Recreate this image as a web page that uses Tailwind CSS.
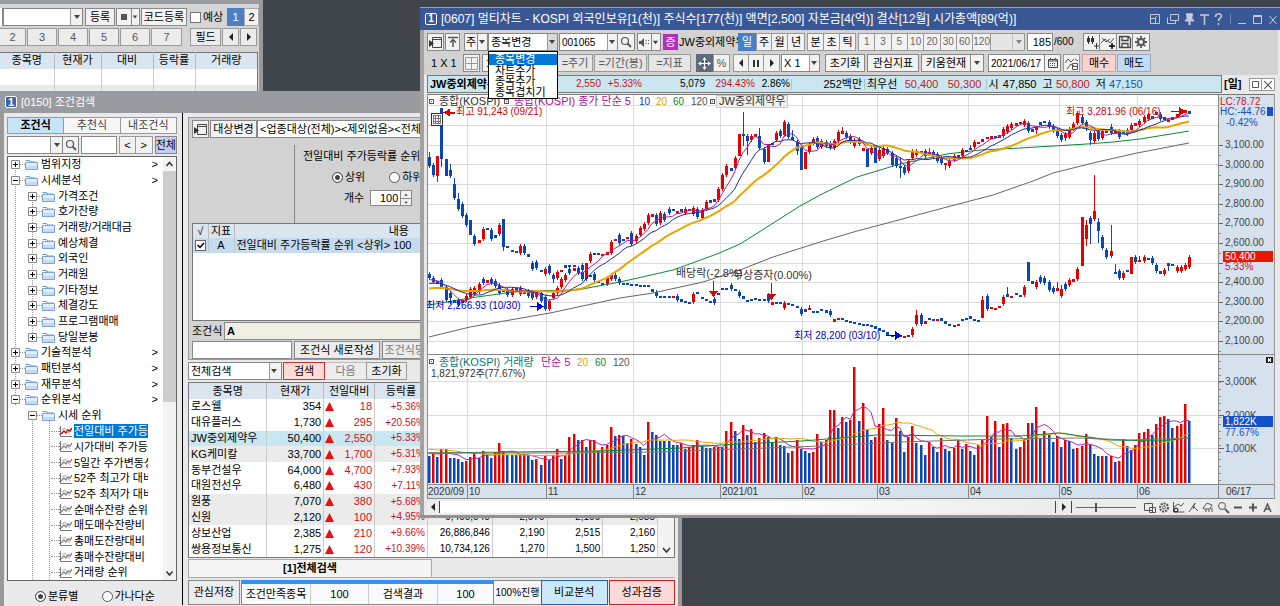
<!DOCTYPE html>
<html lang="ko">
<head>
  <meta charset="utf-8">
  <meta name="viewport" content="width=device-width, initial-scale=1">
  <title>멀티차트</title>
  <script src="https://cdn.jsdelivr.net/npm/@tailwindcss/browser@4"></script>
</head>
<body class="bg-[#40444b] text-black">

<!-- icons -->
<svg class="hidden">
  <symbol id="down" viewBox="0 0 8 8"><path d="M1 2h6L4 6z" fill="#444"/></symbol>
  <symbol id="left" viewBox="0 0 8 8"><path d="M6 0v8L2 4z" fill="#222"/></symbol>
  <symbol id="right" viewBox="0 0 8 8"><path d="M2 0v8l4-4z" fill="#222"/></symbol>
  <symbol id="search" viewBox="0 0 12 12"><circle cx="5" cy="5" r="3.5" fill="none" stroke="#555" stroke-width="1.2"/><path d="M7.500 7.500L11 11" stroke="#555" stroke-width="1.800"/></symbol>
  <symbol id="folder" viewBox="0 0 13 11"><path d="M.5 1.500h4l1.500 1.500h5.500v2" fill="#c3dafa" stroke="#6d97cf"/><path d="M.5 3.500h12v7H.5z" fill="#c3dafa" stroke="#7ba3d8"/><path d="M1 4h11v3H1z" fill="#e3eefc"/></symbol>
  <symbol id="graph" viewBox="0 0 13 11"><path d="M1.500 0v10.500H13M0 2.500h1.500M0 5.500h1.500M0 8.500h1.500M4.500 10v1M7.500 10v1M10.500 10v1" fill="none" stroke="#777"/><path d="M2 8l3-3 2 2 2-3 2 1 2-3" fill="none" stroke="currentColor" stroke-width="1.400"/><path d="M3 4l3-2 2 3 3 3" fill="none" stroke="#aaa"/></symbol>
  <symbol id="dock" viewBox="0 0 13 13"><path d="M3.500 1.500h9v10h-9zM3.500 3.500h9" fill="none" stroke="#444"/><path d="M0 4v7l5-3.500z" fill="#333"/></symbol>
  <symbol id="totop" viewBox="0 0 12 12"><path d="M1 1.500h10M6 11V4M3 6.500L6 3.500l3 3" fill="none" stroke="#555" stroke-width="1.500"/></symbol>
  <symbol id="minus" viewBox="0 0 9 9"><path d="M.5.5h8v8h-8z" fill="#fff" stroke="#888"/><path d="M2 4.500h5" stroke="#000"/></symbol>
  <symbol id="plus" viewBox="0 0 9 9"><path d="M.5.5h8v8h-8z" fill="#fff" stroke="#888"/><path d="M2 4.500h5M4.500 2v5" stroke="#000"/></symbol>
</svg>

<div class="relative h-screen overflow-hidden font-['Liberation_Sans','Noto_Sans_CJK_KR',sans-serif] text-[11px] leading-none whitespace-nowrap">

  <!-- watch list window -->
  <section class="absolute left-0 top-0 w-[263px] bg-[#d5d5d5] border-r-4 border-[#999]">
    <div class="h-1 bg-[#999da0]"></div>
    <div class="flex items-center h-[18px] mt-1">
      <span class="w-[3px] h-full bg-white border-r border-[#888]"></span>
      <div class="flex w-[80px] h-full border border-[#888] bg-white">
        <input type="text" aria-label="그룹" class="flex-1 w-0 outline-none">
        <button aria-label="그룹 열기" class="w-3 border-l border-[#999] bg-[#f2f2f2]"><svg class="size-2 m-auto"><use href="#down"/></svg></button>
      </div>
      <button class="w-[30px] h-full ml-[2px] border border-[#888] bg-[#f2f2f2]">등록</button>
      <button class="w-[16px] h-full ml-px border border-[#888] bg-[#f2f2f2] flex items-center justify-center" aria-label="색"><span class="size-[6px] bg-[#555]"></span></button>
      <button class="w-2 h-full border border-l-0 border-[#888] bg-[#f2f2f2]" aria-label="색 선택"><svg class="size-[6px]"><use href="#down"/></svg></button>
      <button class="w-[46px] h-full ml-px border border-[#888] bg-[#f2f2f2]">코드등록</button>
      <label class="flex items-center ml-[3px]"><input type="checkbox" class="appearance-none size-[11px] border border-[#777] bg-white mr-[2px]">예상</label>
      <button class="w-[17px] h-full ml-auto bg-[#4c80c4] text-white">1</button>
      <button class="w-[15px] h-full border border-[#aaa] bg-[#f2f2f2]">2</button>
    </div>
    <div class="flex h-[18px] mt-[2px] gap-px text-[#555]">
      <button class="w-[26px] border border-l-0 border-[#999] bg-[#ececec]">2</button>
      <button class="w-[30px] border border-[#999] bg-[#ececec]">3</button>
      <button class="w-[30px] border border-[#999] bg-[#ececec]">4</button>
      <button class="w-[30px] border border-[#999] bg-[#ececec]">5</button>
      <button class="w-[30px] border border-[#999] bg-[#ececec]">6</button>
      <button class="w-[31px] border border-[#999] bg-[#ececec]">7</button>
      <button class="w-[31px] ml-auto border border-[#999] bg-[#ececec] text-black">필드</button>
      <button class="w-[17px] border border-[#999] bg-[#ececec]" aria-label="이전"><svg class="size-2 m-auto"><use href="#left"/></svg></button>
      <button class="w-[17px] mr-[2px] border border-[#999] bg-[#ececec]" aria-label="다음"><svg class="size-2 m-auto"><use href="#right"/></svg></button>
    </div>
    <table class="w-[258px] mt-[6px] table-fixed border-t border-r border-[#777] bg-white">
      <thead><tr class="h-4 bg-[#dbe5f0]">
        <th class="w-[54px] font-normal border-r border-[#bbb]">종목명</th>
        <th class="w-[47px] font-normal border-r border-[#bbb]">현재가</th>
        <th class="w-[52px] font-normal border-r border-[#bbb]">대비</th>
        <th class="w-[42px] font-normal border-r border-[#bbb]">등락률</th>
        <th class="font-normal">거래량</th>
      </tr></thead>
      <tbody>
        <tr class="h-4"><td class="border-r border-[#ccc]"></td><td class="border-r border-[#ccc]"></td><td class="border-r border-[#ccc]"></td><td class="border-r border-[#ccc]"></td><td></td></tr>
        <tr class="h-4 bg-[#ebebeb]"><td class="border-r border-[#ccc]"></td><td class="border-r border-[#ccc]"></td><td class="border-r border-[#ccc]"></td><td class="border-r border-[#ccc]"></td><td></td></tr>
      </tbody>
    </table>
  </section>

  <!-- condition search window -->
  <section class="absolute left-0 top-[91px] bottom-0 w-[682px] bg-[#e9e9e9] border-x-4 border-[#999]">
    <header class="flex items-center h-[22px] -mx-1 pl-[5px] bg-[#989ca0] text-white">
      <span class="flex items-center justify-center size-3 rounded-xs border border-white bg-[#3e63a8] font-bold">1</span>
      <h2 class="ml-1">[0150] 조건검색</h2>
    </header>
    <div class="flex">
      <div class="w-[179px] pt-1 pl-[3px] pr-[5px] border-r border-black">
        <div class="flex h-[17px] border border-[#999] text-[#444]">
          <button class="flex-1 bg-[#c5e4fa] font-bold text-black">조건식</button>
          <button class="flex-1 border-l border-[#999] bg-[#f6f6f6]">추천식</button>
          <button class="flex-1 border-l border-[#999] bg-[#f6f6f6]">내조건식</button>
        </div>
        <div class="flex h-[18px] mt-[2px] mb-[2px]">
          <div class="flex w-[57px] border border-[#888] bg-white">
            <input type="text" aria-label="조건 찾기" class="flex-1 w-0 outline-none">
            <button class="w-3 border-l border-[#999] bg-[#f2f2f2]" aria-label="목록"><svg class="size-2 m-auto"><use href="#down"/></svg></button>
          </div>
          <button class="w-4 border border-l-0 border-[#888] bg-[#f2f2f2]" aria-label="찾기"><svg class="size-3 m-auto"><use href="#search"/></svg></button>
          <input type="text" aria-label="이름" class="w-9 ml-[2px] border border-[#888] bg-white outline-none">
          <button class="w-[17px] ml-[2px] border border-[#999] bg-[#f2f2f2]">&lt;</button>
          <button class="w-[17px] border border-l-0 border-[#999] bg-[#f2f2f2]">&gt;</button>
          <button class="flex-1 ml-[2px] border border-[#888] bg-[#c6ccf0]">전체</button>
        </div>
        <div class="relative flex h-[425px] border border-[#666] bg-white overflow-hidden">
          <span class="absolute left-[7px] top-1 h-[244px] border-l border-dotted border-[#999]"></span>
          <span class="absolute left-[24px] top-[36px] h-[148px] border-l border-dotted border-[#999]"></span>
          <span class="absolute left-[24px] top-[254px] bottom-0 border-l border-dotted border-[#999]"></span>
          <span class="absolute left-[41px] top-[264px] bottom-0 border-l border-dotted border-[#999]"></span>
          <ul id="tree" class="relative flex flex-col flex-1 min-w-0"></ul>
          <div class="flex flex-col w-[13px] bg-[#f3f3f3]">
            <svg class="w-[13px] h-[14px]" viewBox="0 0 13 14"><path d="M3.500 9L6.500 5.500 9.500 9" fill="none" stroke="#333" stroke-width="1.500"/></svg>
            <span class="h-[231px] bg-[#cdcdcd]"></span>
            <svg class="w-[13px] h-[14px] mt-auto" viewBox="0 0 13 14"><path d="M3.500 5.500L6.500 9 9.500 5.500" fill="none" stroke="#333" stroke-width="1.500"/></svg>
          </div>
        </div>
        <div class="flex mt-[10px] pl-7">
          <label class="flex items-center"><input type="radio" name="sort" checked class="appearance-none size-[11px] mr-[2px] rounded-full border border-[#555] bg-white checked:bg-[#444] checked:shadow-[inset_0_0_0_2px_white]">분류별</label>
          <label class="flex items-center ml-6"><input type="radio" name="sort" class="appearance-none size-[11px] mr-px rounded-full border border-[#555] bg-white">가나다순</label>
        </div>
      </div>

      <div class="flex-1 ml-[5px] pt-1 pr-[3px] min-w-0">
        <div class="border border-[#999] bg-[#d2d2d2] pl-[3px] pt-[2px]">
          <div class="flex h-[18px]">
            <button class="w-[17px] border border-[#888] bg-[#f2f2f2]" aria-label="고정"><svg class="size-[13px] m-auto"><use href="#dock"/></svg></button>
            <button class="w-[47px] ml-px border border-[#888] bg-[#f2f2f2]">대상변경</button>
            <div class="flex flex-1 items-center pl-[2px] border border-[#888] bg-white">&lt;업종대상(전체)&gt;&lt;제외없음&gt;&lt;전체기간&gt;</div>
          </div>
          <div class="flex pt-[7px]">
            <div class="w-[103px] border-r border-[#888]"></div>
            <div class="pt-[6px] pl-2 h-[78px]">
              <p class="h-[18px]">전일대비 주가등락률 순위</p>
              <div class="flex items-center h-4 pl-[29px]">
                <label class="flex items-center"><input type="radio" name="rank" checked class="appearance-none size-[11px] mr-[2px] rounded-full border border-[#555] bg-white checked:bg-[#444] checked:shadow-[inset_0_0_0_2px_white]">상위</label>
                <label class="flex items-center ml-6"><input type="radio" name="rank" class="appearance-none size-[11px] mr-[2px] rounded-full border border-[#555] bg-white">하위</label>
              </div>
              <div class="flex items-center mt-[5px] pl-[41px]">
                <label for="cnt">개수</label>
                <input id="cnt" type="text" value="100" class="w-[31px] h-4 ml-[6px] px-[2px] border border-[#888] bg-white text-right">
                <span class="flex flex-col w-[11px] h-4 border border-l-0 border-[#888] bg-[#f2f2f2]">
                  <svg class="flex-1" viewBox="0 0 10 7"><path d="M3 5l2-2 2 2z" fill="#444"/></svg>
                  <svg class="flex-1 border-t border-[#888]" viewBox="0 0 10 7"><path d="M3 3l2 2 2-2z" fill="#444"/></svg>
                </span>
              </div>
            </div>
          </div>
          <div class="h-[98px] border border-[#777] bg-white">
            <table class="w-full table-fixed">
              <thead><tr class="h-[14px] bg-[#dbe5f0]"><th class="w-[15px] font-normal border-r border-[#bbb]">√</th><th class="w-[26px] font-normal border-r border-[#bbb]">지표</th><th class="font-normal pr-[110px]">내용</th></tr></thead>
              <tbody><tr class="h-[15px] bg-[#c8dbec]">
                <td class="border-r border-[#b5c8d8]"><svg class="size-[11px] mx-auto bg-white border border-[#666]" viewBox="0 0 9 9"><path d="M1.500 4L4 6.500 8 2" fill="none" stroke="#000" stroke-width="1.500"/></svg></td>
                <td class="text-center border-r border-[#b5c8d8]">A</td>
                <td class="pl-[2px]">전일대비 주가등락률 순위 &lt;상위&gt; 100</td>
              </tr></tbody>
            </table>
          </div>
          <div class="flex items-center h-[18px] mt-px">
            <label for="expr" class="w-8">조건식</label>
            <input id="expr" type="text" value="A" class="flex-1 h-full px-[2px] border border-[#888] bg-[#efefe6] font-bold">
          </div>
          <div class="flex h-[18px] mt-px">
            <input type="text" aria-label="조건식 이름" class="w-[100px] border border-[#888] bg-white">
            <button class="w-[86px] ml-[2px] border border-[#888] bg-[#ececec]">조건식 새로작성</button>
            <button class="w-[76px] ml-[2px] border border-[#888] bg-[#ececec] text-[#777]">조건식당일저장</button>
          </div>
        </div>
        <div class="flex h-[18px] mt-[2px]">
          <div class="relative w-[94px] border border-[#888] bg-white">
            <select aria-label="검색 대상" class="appearance-none w-full h-4 pl-[2px] outline-none"><option>전체검색</option></select>
            <span class="absolute right-0 top-0 w-3 h-4 pt-1 border-l border-[#999] bg-[#f2f2f2] pointer-events-none"><svg class="size-2"><use href="#down"/></svg></span>
          </div>
          <button class="w-[42px] ml-px border border-[#c33] bg-[#fddcd8]">검색</button>
          <button class="w-[41px] border-y border-[#bbb] bg-[#ececec] text-[#777]">다음</button>
          <button class="w-[41px] border border-[#999] bg-[#ececec]">초기화</button>
        </div>
        <div class="flex mt-[2px] border border-[#777] bg-white">
          <table class="flex-1 h-[174px] table-fixed text-right">
            <thead><tr class="h-4 bg-[#dbe5f0] text-center">
              <th class="w-[78px] h-4 font-normal border-r border-[#bbb]">종목명</th>
              <th class="w-[57px] font-normal border-r border-[#bbb]">현재가</th>
              <th class="w-[51px] font-normal border-r border-[#bbb]">전일대비</th>
              <th class="w-[53px] font-normal border-r border-[#bbb]">등락률</th>
              <th class="w-[65px] font-normal border-r border-[#bbb]"></th>
              <th class="w-[55px] font-normal border-r border-[#bbb]"></th>
              <th class="w-[56px] font-normal border-r border-[#bbb]"></th>
              <th class="w-[55px] font-normal border-r border-[#bbb]"></th>
            </tr></thead>
            <tbody id="result"></tbody>
          </table>
          <div class="flex items-end justify-center w-4 bg-[#f3f3f3]"><svg class="w-[13px] h-[14px]" viewBox="0 0 13 14"><path d="M3 5l3.500 4L10 5" fill="none" stroke="#333" stroke-width="1.500"/></svg></div>
        </div>
        <div class="flex h-[19px] mt-px border-b border-[#aaa]">
          <div class="flex items-center justify-center w-[244px] border border-b-0 border-[#aaa] bg-[#f4f4f4] font-bold">[1]전체검색</div>
        </div>
        <div class="flex h-[25px] mt-[2px]">
          <button class="w-[52px] border border-[#888] bg-[#ececec]">관심저장</button>
          <div class="flex w-[253px] ml-px border border-t-4 border-[#888] border-t-[#3391f5] bg-[#f8fafc] text-center">
            <span class="flex-1 pt-[5px]">조건만족종목</span>
            <span class="w-[58px] pt-[5px] border-l border-[#ccc]">100</span>
            <span class="w-[69px] pt-[5px] border-l border-[#ccc]">검색결과</span>
            <span class="w-[56px] pt-[5px] border-l border-[#ccc]">100</span>
          </div>
          <span class="flex items-center justify-center w-[47px] border-y border-[#888] bg-[#f6f6f6] text-[10px]">100%진행</span>
          <button class="flex-1 border border-[#2a5cb0] bg-[#cbe8f8]">비교분석</button>
          <button class="flex-1 ml-px border border-[#c22] bg-[#fddada]">성과검증</button>
        </div>
      </div>
    </div>
  </section>

  <!-- multi chart window -->
  <section class="absolute left-[420px] right-0 top-[7px] pt-px border-b-[3px] border-[#8f9193] bg-[#a2a2a2]">
    <header class="flex items-center h-[22px] pl-[5px] pr-[2px] bg-[#3a5795] text-white">
      <span class="flex items-center justify-center size-3 rounded-xs border border-white font-bold text-[10px]">1</span>
      <h1 class="ml-1 text-[12px]">[0607] 멀티차트 - KOSPI 외국인보유[1(천)] 주식수[177(천)] 액면[2,500] 자본금[4(억)] 결산[12월] 시가총액[89(억)]</h1>
      <svg class="w-[130px] h-4 ml-auto" viewBox="1148 10 130 16" fill="none" stroke="#c3cde2">
        <path d="M1150.500 13.500h9v9h-9zM1150.500 17.500h5v5M1157 15l-3 3"/>
        <path d="M1170.500 13.500h8v6h-8zM1167.500 16.500v6h8v-3"/>
        <path d="M1186 13.500h7M1189.500 19v5M1185 19.500h9" stroke-width="2"/><path d="M1187 13h5v6h-5z" fill="#c3cde2"/>
        <path d="M1200 14h9M1204.500 14v10" stroke-width="1.500"/>
        <path d="M1215.500 16c0-4 6-4 6-1 0 2-3 2-3 5M1218.500 22v2" stroke-width="1.500"/>
        <path d="M1230.500 13v10" stroke="#7387b3"/>
        <path d="M1238 22.500h8M1253.500 14.500h8v8h-8zM1253 15.500h9M1269.500 15l7 8M1276.500 15l-7 8"/>
      </svg>
    </header>
    <div class="ml-1 pl-[3px] pr-[5px] bg-[#e9e9e9]">
      <div class="-mx-[3px] px-[3px] pt-[3px] pb-[3px] bg-[#d2d2d2]">
        <div class="flex h-[18px]">
          <button class="w-[17px] border border-[#888] bg-[#f2f2f2]" aria-label="고정"><svg class="size-[13px] m-auto"><use href="#dock"/></svg></button>
          <button class="w-[15px] ml-px border border-[#888] bg-[#f2f2f2]" aria-label="맨위로"><svg class="size-3 m-auto"><use href="#totop"/></svg></button>
          <button class="w-[14px] ml-1 border border-[#888] bg-[#f2f2f2]">주</button>
          <button class="w-[10px] border border-l-0 border-[#888] bg-[#f2f2f2]" aria-label="주기 목록"><svg class="size-2"><use href="#down"/></svg></button>
          <div class="relative w-[70px] border border-[#888] bg-white">
            <select aria-label="차트 동작" class="appearance-none w-full h-4 pl-[2px] outline-none"><option>종목변경</option><option>차트추가</option><option>종목추가</option><option>종목겹치기</option></select>
            <span class="absolute right-0 top-0 w-[10px] h-4 pt-1 border-l border-[#999] bg-[#d8d8d8] pointer-events-none"><svg class="size-2"><use href="#down"/></svg></span>
            <!-- open list -->
            <ul class="absolute z-10 left-[-1px] top-[17px] w-[70px] pt-[2px] border border-black bg-white">
              <li class="h-[11px] pl-[6px] bg-[#0078d7] text-white">종목변경</li>
              <li class="h-[11px] pl-[6px]">차트추가</li>
              <li class="h-[11px] pl-[6px]">종목추가</li>
              <li class="h-[11px] pl-[6px]">종목겹치기</li>
            </ul>
          </div>
          <div class="flex w-[59px] ml-px border border-[#888] bg-white">
            <input type="text" aria-label="종목코드" value="001065" class="flex-1 w-0 pl-[2px] text-[10px] outline-none">
            <button class="w-[10px] border-l border-[#999] bg-[#f2f2f2]" aria-label="종목 목록"><svg class="size-2"><use href="#down"/></svg></button>
          </div>
          <button class="w-[17px] border border-l-0 border-[#888] bg-[#f2f2f2]" aria-label="종목 찾기"><svg class="size-3 m-auto"><use href="#search"/></svg></button>
          <button class="w-[15px] ml-[2px] border border-[#888] bg-[#f2f2f2]" aria-label="음성"><svg class="size-[11px] m-auto" viewBox="0 0 11 11"><path d="M0 4h2l3-3v9L2 7H0z" fill="#555"/><path d="M7 3v1M7 6v1M9.500 3v1M9.500 6v1" stroke="#555"/></svg></button>
          <button class="w-[9px] border border-l-0 border-[#888] bg-[#f2f2f2]" aria-label="음성 설정"><svg class="size-[7px]"><use href="#down"/></svg></button>
          <span class="flex items-center justify-center w-[15px] ml-[2px] my-px bg-[#b32ec0] text-white">증</span>
          <span class="flex items-center w-[60px] pl-px overflow-hidden">JW중외제약우</span>
          <button class="w-[18px] bg-[#4780c8] text-white">일</button>
          <button class="w-4 border border-[#999] bg-[#f2f2f2]">주</button>
          <button class="w-4 border border-l-0 border-[#999] bg-[#f2f2f2]">월</button>
          <button class="w-[17px] border border-l-0 border-[#999] bg-[#f2f2f2]">년</button>
          <button class="w-[17px] ml-[2px] border border-[#999] bg-[#f2f2f2]">분</button>
          <button class="w-4 border border-l-0 border-[#999] bg-[#f2f2f2]">초</button>
          <button class="w-4 border border-l-0 border-[#999] bg-[#f2f2f2]">틱</button>
          <div class="flex w-[133px] ml-[2px] text-[10px] text-[#666] divide-x divide-[#999] border border-[#999] bg-[#f2f2f2]">
            <button class="flex-1">1</button><button class="flex-1">3</button><button class="flex-1">5</button><button class="flex-1">10</button><button class="flex-1">20</button><button class="flex-1">30</button><button class="flex-1">60</button><button class="flex-1">120</button>
          </div>
          <div class="flex justify-end w-[34px] border border-l-0 border-[#999] bg-[#e6e6e6]"><button class="w-3 border-l border-[#aaa] opacity-60" aria-label="분 선택"><svg class="size-2 m-auto"><use href="#down"/></svg></button></div>
          <input type="text" aria-label="표시 개수" value="185" class="w-[26px] ml-[2px] pr-px border border-[#888] bg-white text-right">
          <span class="self-center w-[30px] pl-px text-[10px]">/600</span>
          <button class="w-[17px] border border-[#888] bg-[#f2f2f2]" aria-label="봉 추가"><svg class="size-[14px] m-auto" viewBox="0 0 14 14"><path d="M3.500 1v8M7.500 1v8M11.500 8v6M9 11h5" stroke="#333"/><path d="M2 3h3v4H2zM6 3h3v4H6z" fill="#333"/></svg></button>
          <button class="w-[17px] border border-l-0 border-[#888] bg-[#f2f2f2]" aria-label="지표 추가"><svg class="size-[14px] m-auto" viewBox="0 0 14 14"><path d="M0 8l4-4 5 4 4-5M1 3l4 4 4-3" fill="none" stroke="#555"/><path d="M11 8v6M8 11h6" stroke="#000" stroke-width="1.500"/></svg></button>
          <button class="w-[16px] border border-l-0 border-[#888] bg-[#f2f2f2]" aria-label="저장"><svg class="size-[14px] m-auto" viewBox="0 0 14 14" fill="none" stroke="#444" stroke-width="1.300"><path d="M1.500 1.500h9l2 2v9h-11zM4 1.500v4h6v-4M4 12.500v-4h6v4"/></svg></button>
          <button class="w-[17px] border border-l-0 border-[#888] bg-[#f2f2f2]" aria-label="설정"><svg class="size-[14px] m-auto" viewBox="0 0 14 14" fill="none" stroke="#555"><circle cx="7" cy="7" r="3" stroke-width="2"/><path d="M7 1v2M7 11v2M1 7h2M11 7h2M2.800 2.800l1.400 1.400M9.800 9.800l1.400 1.400M11.200 2.800L9.800 4.200M4.200 9.800l-1.400 1.400" stroke-width="1.800"/></svg></button>
        </div>
        <div class="flex h-[18px] mt-[3px]">
          <span class="self-center w-9 pl-1">1 X 1</span>
          <button class="w-[17px] border border-[#888] bg-[#f2f2f2]" aria-label="분할"><svg class="size-[13px] m-auto" viewBox="0 0 13 13" fill="none" stroke="#999"><path d="M.5.5h12v12H.5zM6.500 1v11M1 6.500h11"/></svg></button>
          <button class="w-[74px] ml-[2px] pl-[3px] border border-[#888] bg-[#f2f2f2] text-left">1</button>
          <button class="w-[36px] ml-px border border-[#999] bg-[#e6e6e6] text-[#555]">=주기</button>
          <button class="w-[53px] ml-px border border-[#999] bg-[#e6e6e6] text-[#555]">=기간(봉)</button>
          <button class="w-[43px] ml-px border border-[#999] bg-[#e6e6e6] text-[#555]">=지표</button>
          <button class="w-[17px] ml-[5px] bg-[#5f6b7d]" aria-label="이동"><svg class="size-[13px] m-auto" viewBox="0 0 13 13"><path d="M6.500 2v9M2 6.500h9" stroke="#fff"/><path d="M6.500 0l2 3h-4zM6.500 13l2-3h-4zM0 6.500l3-2v4zM13 6.500l-3-2v4z" fill="#fff"/></svg></button>
          <button class="w-[17px] border border-[#999] bg-[#f2f2f2] text-[#555]">%</button>
          <button class="w-4 ml-[3px] border border-[#999] bg-[#f2f2f2]" aria-label="뒤로"><svg class="size-2 m-auto"><use href="#left"/></svg></button>
          <button class="flex items-center justify-center gap-[2px] w-[15px] border border-l-0 border-[#999] bg-[#f2f2f2]" aria-label="정지"><span class="w-[2px] h-[7px] bg-[#333]"></span><span class="w-[2px] h-[7px] bg-[#333]"></span></button>
          <button class="w-[16px] border border-l-0 border-[#999] bg-[#f2f2f2]" aria-label="앞으로"><svg class="size-2 m-auto"><use href="#right"/></svg></button>
          <div class="relative w-[39px] ml-px border border-[#888] bg-white">
            <select aria-label="배속" class="appearance-none w-full h-4 pl-[2px] outline-none"><option>X 1</option></select>
            <span class="absolute right-0 top-0 w-[10px] h-4 pt-1 border-l border-[#999] bg-[#f2f2f2] pointer-events-none"><svg class="size-2"><use href="#down"/></svg></span>
          </div>
          <button class="w-10 ml-[5px] border border-[#888] bg-[#f2f2f2]">초기화</button>
          <button class="w-[52px] ml-[2px] border border-[#888] bg-[#f2f2f2]">관심지표</button>
          <button class="w-[50px] ml-[2px] border border-[#888] bg-[#f2f2f2]">키움현재</button>
          <button class="w-[13px] border border-l-0 border-[#888] bg-[#f2f2f2]" aria-label="키움현재 목록"><svg class="size-2 m-auto"><use href="#down"/></svg></button>
          <input type="text" aria-label="날짜" value="2021/06/17" class="w-[57px] ml-1 pl-[2px] border border-[#888] bg-white text-[10px]">
          <button class="w-4 border border-l-0 border-[#888] bg-[#f2f2f2]" aria-label="달력"><svg class="size-3 m-auto" viewBox="0 0 12 12"><path d="M1.500 2.500h9v8h-9zM3.500 1v2M8.500 1v2M1 4h10" fill="none" stroke="#444"/><path d="M3 6.500h6M3 8.500h6" stroke="#555" stroke-dasharray="1 1"/></svg></button>
          <button class="w-[17px] ml-[2px] border border-[#999] bg-[#f2f2f2]" aria-label="지표 저장"><svg class="size-[14px] m-auto" viewBox="0 0 14 14" fill="none" stroke="#555"><path d="M0 7l3-4 3 3 3-3M2 13l4-5 3 2M7.500 7.500h5v6h-5zM7.500 10.500h5M10 3l3 2"/></svg></button>
          <button class="w-[34px] ml-[2px] border border-[#c9a5a5] bg-[#f9d3cf]">매수</button>
          <button class="w-[34px] ml-px border border-[#95a9c5] bg-[#c3dcf5]">매도</button>
        </div>
      </div>

      <div class="flex h-[18px] mb-px">
        <div class="relative flex flex-1 items-center border border-[#777] bg-[#cae7f0]">
          <b class="w-[126px] pl-[2px]">JW중외제약우</b>
          <span class="w-[47px] text-right text-[#c8141e] text-[10px]">2,550</span>
          <span class="w-[41px] text-right text-[#c8141e] text-[10px]">+5.33%</span>
          <span class="w-[63px] text-right text-[10px]">5,079</span>
          <span class="w-[50px] text-right text-[#c8141e] text-[10px]">294.43%</span>
          <span class="w-[35px] text-right text-[10px]">2.86%</span>
          <span class="w-[71px] text-right border-l border-[#a9c3cc] ml-px">252백만</span>
          <span class="ml-[2px] pl-[2px] border-l border-[#a9c3cc]">최우선</span>
          <span class="w-[41px] text-right text-[#c8141e]">50,400</span>
          <span class="w-[43px] text-right text-[#c8141e]">50,300</span>
          <span class="ml-[5px] pl-px border-l border-[#a9c3cc]">시</span>
          <span class="w-[38px] text-right">47,850</span>
          <span class="ml-[6px]">고</span>
          <span class="w-[37px] text-right text-[#c8141e]">50,800</span>
          <span class="ml-[6px]">저</span>
          <span class="w-[37px] text-right text-[#1550b8]">47,150</span>
        </div>
        <span class="self-center w-[27px] pl-[2px] font-bold">[일]</span>
        <button class="self-center size-[13px] border border-[#999] bg-white" aria-label="최대화"><svg viewBox="0 0 11 11" fill="none" stroke="#555"><path d="M2.500 2.500h6v6h-6z"/></svg></button>
        <button class="self-center size-[13px] border border-l-0 border-[#999] bg-white" aria-label="닫기"><svg viewBox="0 0 11 11" fill="none" stroke="#555"><path d="M2 2l7 7M9 2L2 9"/></svg></button>
      </div>

      <svg id="chart" class="block w-full" viewBox="427 94 848 405" shape-rendering="crispEdges"></svg>

      <div class="flex items-center h-4 bg-[#ececec]">
        <button class="w-3 h-full" aria-label="왼쪽으로"><svg class="size-2 m-auto"><use href="#left"/></svg></button>
        <div class="flex-1 h-[12px] border-l border-[#444] bg-gradient-to-r from-white from-50% to-[#ececec]"></div>
        <button class="w-[17px] h-[12px] border-x border-[#444]" aria-label="오른쪽으로"><svg class="size-2 m-auto"><use href="#right"/></svg></button>
        <input type="range" aria-label="확대" min="0" max="100" value="33" class="w-[60px] ml-[4px] h-3 appearance-none bg-transparent bg-[linear-gradient(#666,#666)] bg-[length:100%_1px] bg-no-repeat bg-center [&::-webkit-slider-thumb]:appearance-none [&::-webkit-slider-thumb]:w-[2px] [&::-webkit-slider-thumb]:h-[9px] [&::-webkit-slider-thumb]:bg-[#555]">
        <svg class="w-[135px] h-4 ml-[4px]" viewBox="1141 499 135 16" fill="none" stroke="#555">
          <path d="M1145.500 503.500h8v7h-8zM1150.500 507.500h6v5h-6zM1153.500 507v5"/>
          <circle cx="1165" cy="507.500" r="4" stroke-width="2" stroke-dasharray="2 1"/><circle cx="1165" cy="507.500" r="1.500"/>
          <path d="M1174.500 502v10h11M1175 507l4-3 3 2 3-3"/><circle cx="1177" cy="510" r="2" stroke="#000"/>
          <path d="M1190 512l6-9M1196 503l-2 6M1194 506l5 5"/>
          <path d="M1204 508l4-5 5 2-2 4h-6zM1207 512v-3M1210 512v-3M1213 512v-4"/>
          <circle cx="1223" cy="506" r="3.500"/><path d="M1226 509l4 4" stroke-width="1.800"/>
          <path d="M1235 507.500h8" stroke-width="2"/><path d="M1250 507.500h8M1254 503.500v8" stroke-width="2"/>
          <path d="M1265 512l3.500-8 3.500 8M1266 509h5" stroke-width="1.500"/>
        </svg>
      </div>
    </div>
  </section>
</div>

<script>
// condition tree: [level, expander, label, arrow]
var nodes = [
  [0,'plus','범위지정',1],[0,'minus','시세분석',1],
  [1,'plus','가격조건'],[1,'plus','호가잔량'],[1,'plus','거래량/거래대금'],[1,'plus','예상체결'],[1,'plus','외국인'],
  [1,'plus','거래원'],[1,'plus','기타정보'],[1,'plus','체결강도'],[1,'plus','프로그램매매'],[1,'plus','당일분봉'],
  [0,'plus','기술적분석',1],[0,'plus','패턴분석',1],[0,'plus','재무분석',1],[0,'minus','순위분석',1],[1,'minus','시세 순위'],
  [2,'','전일대비 주가등락률'],[2,'','시가대비 주가등락률'],[2,'','5일간 주가변동성'],[2,'','52주 최고가 대비'],[2,'','52주 최저가 대비'],
  [2,'','순매수잔량 순위'],[2,'','매도매수잔량비'],[2,'','총매도잔량대비'],[2,'','총매수잔량대비'],[2,'','거래량 순위']
];
var html = '';
nodes.forEach(function (n, i) {
  if (n[0] === 2) {
    var on = i === 17;
    html += '<li class="flex flex-1 items-center pl-[43px]"><span class="w-2 border-t border-dotted border-[#999]"></span>' +
      '<svg class="w-[13px] h-[11px] ' + (on ? 'text-[#c00]' : 'text-[#888]') + '"><use href="#graph"/></svg>' +
      '<span class="w-[74px] ml-[2px] h-[14px] leading-[14px] overflow-hidden ' + (on ? 'bg-[#0078d7] text-white' : '') + '">' + n[2] + '</span></li>';
  } else {
    html += '<li class="flex flex-1 items-center ' + (n[0] ? 'pl-[20px]' : 'pl-[3px]') + '"><svg class="size-[9px]"><use href="#' + n[1] + '"/></svg>' +
      '<span class="w-[5px] border-t border-dotted border-[#999]"></span><svg class="w-[13px] h-[11px]"><use href="#folder"/></svg>' +
      '<span class="ml-[3px]">' + n[2] + '</span>' + (n[3] ? '<span class="ml-auto mr-[5px]">&gt;</span>' : '') + '</li>';
  }
});
document.getElementById('tree').innerHTML = html;

// search result
var rows = [
  ['로스웰','354','18','+5.36%'],['대유플러스','1,730','295','+20.56%'],['JW중외제약우','50,400','2,550','+5.33%'],
  ['KG케미칼','33,700','1,700','+5.31%'],['동부건설우','64,000','4,700','+7.93%'],['대원전선우','6,480','430','+7.11%'],
  ['원풍','7,070','380','+5.68%'],['신원','2,120','100','+4.95%','9,400,040','2,070','2,100','2,035'],
  ['상보산업','2,385','210','+9.66%','26,886,846','2,190','2,515','2,160'],['쌍용정보통신','1,275','120','+10.39%','10,734,126','1,270','1,500','1,250']
];
html = '';
rows.forEach(function (r, i) {
  var bg = i === 2 ? 'bg-[#c9e7f1]' : (i === 3 || i === 6 || i === 7) ? 'bg-[#ebebeb]' : 'bg-white';
  html += '<tr class="' + bg + '"><td class="pl-[2px] text-left border-r border-[#ccc]">' + r[0] + '</td>' +
    '<td class="pr-[2px] border-r border-[#ccc]">' + r[1] + '</td>' +
    '<td class="pr-[2px] border-r border-[#ccc] text-[#c8141e]"><div class="flex items-center justify-between pl-px"><svg class="size-[9px]" viewBox="0 0 9 9"><path d="M4.500 0L9 9H0z" fill="#e81010"/></svg>' + r[2] + '</div></td>' +
    '<td class="pr-[2px] border-r border-[#ccc] text-[#c8141e] text-[10px]">' + r[3] + '</td>';
  for (var k = 4; k < 8; k++) html += '<td class="pr-[2px] border-r border-[#ccc] text-[10px]">' + (r[k] || '') + '</td>';
  html += '</tr>';
});
document.getElementById('result').innerHTML = html;

// candles: colour, body top, body height, ^ upper wick, _ lower wick
var kospi = 'b274-4 b278-4 b281-3 b280-7 b287-13 b293-5_6 b300-3 b300-5 r300-3 r296-4 r289-8 r288-6 r284-8 b279-4 r280-3 b279-4 b281-5 b285-8 b289-3 b290-5 ' +
  'r289-6 b288-3 r288-6 r291-3 b291-5 b292-6 r292-5 b293-8 b297-12 r301-8 r293-5 r288-5 r279-8 r275-5 b269-4 r268-3 b268-3 b272-7 r263-15 r254-7 ' +
  'b253-1 b253-2 r254-2 r252-3 r242-11 r239-1 b235-8 b239-2 r237-2 b233-11 r236-5 r228-7 r224-5 r215-8 r214-3 b215-9 r213-10 b214-6 b209-4 b209-2 ' +
  'r211-3 b209-3 r209-4 r209-2 r208-6 b209-8 r210-8 r202-7 b200-3 r199-3 r189-11 r175-14 r166-9 b168-3 r158-10 r134-22 b134-1^22_11 b136-5_14 r136-4 r134-3 ' +
  'b136-12^8 b149-13 r144-18 b143-2 r133-7 b131-5 r122-13 b124-13 b137-3^7 b142-9_4 b147-23 r152-17 r144-8 r139-4 b138-9 r141-6 b142-4 b143-5 r141-7 r132-9 ' +
  'r131-3^4 b133-4 b136-6 r140-6 b139-5 r148-3 b149-18 r148-5 b145-18 r150-9 r148-8 b149-4 b153-12 b158-8 b166-2^9_10 b167-6 r161-10 r151-7 r151-4 r151-2 ' +
  'b151-5 r152-3^4 b152-5 b154-7 b158-5 r163-2_5 r161-5 r156-4 b155-3 r150-6 b150-1 b148-2^3 r142-5 r142-2 r139-3 r137-2 r136-3 b136-2 r135-3 r129-7 ' +
  'r126-6 r124-4 r123-3 r122-2 r121-4 b123-8 b129-3 r127-3_4 b122-3 b121-1 b122-5 b126-5 b130-6 b135-5 r134-4_3 r129-8 r124-5 r113-10 b117-6 b122-7 ' +
  'b133-7_5 r133-8 b131-8 r131-7 b130-3 b127-6^3 r131-3 b131-6 b131-3 b130-4 r125-5 r123-3 r121-4 r117-5 r115-4 b116-3 b112-3 b114-5 b117-3 r120-2 ' +
  'r117-3 r114-3 r112-2 r110-3 b111-3';
var stock = 'b157-9^5 b165-10 r156-20_6 b108-51_8 b159-17 b170-6^6 b184-14^6 b199-10^6 b204-12 b215-10 b220-15 b236-8 r240-3 r229-10 b228-1 b230-9 b235-3 r225-9 b219-28_4 b246-2 ' +
  'b250-2 b251-2 r246-7 b246-7 b254-3 b263-6 b262-6 b270-1 r269-5 b266-7 b275-4_4 r272-6 r270-2 b265-3 b265-2 b265-2 b268-5 b265-5 b270-9 b275-2 ' +
  'b274-6 b281-2 b283-2 r278-6 r275-4 b275-4 b279-4 b283-1 b283-1 b284-1 b284-1 b285-1 b285-1 b285-2 b289-3 b292-4 b296-1 b296-1 b296-1 r296-1 ' +
  'b296-4 b299-3 b301-1 b302-1 r294-8 b292-2 b297-2 b299-1 b301-2 b299-4 b293-2 b288-2 b288-1 b285-4 b289-2 b292-4 b296-3 b300-2 b299-1 b298-1 ' +
  'b299-1 b299-1 b295-6 r302-3 b302-2 b302-1 r303-5 b303-2 b304-1 b306-2 b309-5 b309-3 r308-2^3 b311-1 b311-1 b309-2 b310-3 b311-4 r319-3 r318-1 ' +
  'b318-1 b320-1 b321-1 b322-1 b323-2 b324-1 b324-1 b325-2 b326-3 b328-3 b330-2 b332-3 b335-2 b335-1 b335-1 r336-1 b335-1 r329-6 r315-9^5 b315-9 ' +
  'r321-3 b318-2 b319-2 r319-2 b318-3 b321-3 b324-2 r325-1 r324-2 b319-2 b318-1 b316-3 b319-2 b320-1 r300-18^4 b296-13 r307-2 r308-1 r306-1 r297-7 ' +
  'b294-3^7 r296-2 b293-1 b295-1 r287-8 b262-19 b281-3 r282-5 b277-5 b278-5 b282-8 b288-4 r288-3^6 r289-7^4 b284-5 r280-5 r279-3 r269-10 r217-49 r225-14^5_7 ' +
  'b218-6_20 r211-8^36 b222-9^4_12 b237-11 b250-7 r251-5^26 b272-1^8 b271-7 r273-5 b270-2 r257-17 b257-5 r260-2^4 r257-4 b258-2 b258-5 b265-6 b271-3 r270-4 b263-3_5 ' +
  'b264-2 r267-4 r267-4 r265-4 r257-10_2';
var volume = 'b27 r29 b26 r34 r34 b25 b25 b24 b21 r22 r26 r30 b25 r32 b28 b25 r31 r40 r32 b28 b28 b28 r28 r29 b28 b23 r24 b18 r27 b23 ' +
  'r28 r34 b24 r28 r46 r49 b43 r43 b36 r43 r43 b32 r36 r38 r56 b47 r48 b47 b40 r44 b39 b36 b28 r61 b51 b48 b42 b42 b42 b38 ' +
  'b38 r40 b34 r36 r38 r43 b37 b35 b35 r36 r36 b36 r52 r61 b52 b44 r58 b48 r54 b41 r45 r50 b46 b40 r46 b38 b37 b30 r32 r43 ' +
  'b34 b32 b30 r31 r49 b41 r43 r73 r73 b55 r66 b61 r63 r116 b62 r80 b53 b43 r46 r59 r75 b43 b40 r65 b52 b31 r46 r57 b40 b38 ' +
  'b28 r41 b36 b31 r45 b34 b32 r35 r43 b34 r39 b32 b28 r38 r43 r67 b46 r62 b36 r59 r60 b45 b34 r36 r43 r60 b60 r76 b45 r52 ' +
  'b48 b41 r47 b36 r43 b42 b34 r35 r37 r49 b38 b29 b27 r27 b27 r27 b21 r22 r44 b37 b33 r38 r50 r51 r54 b48 r59 r66 r67 b64 ' +
  'b55 r57 r59 r79 b62';

var RED = '#e60000', BLUE = '#0a46b4', s = '';
function x(i) { return 429 + i * 760 / 184; }
function line(x1, y1, x2, y2, c) { s += '<path d="M' + x1 + ' ' + y1 + 'L' + x2 + ' ' + y2 + '" stroke="' + c + '"/>'; }
function rect(a, b, w, h, c) { s += '<rect x="' + a + '" y="' + b + '" width="' + w + '" height="' + h + '" fill="' + c + '"/>'; }
function text(a, b, t, c, size) { s += '<text x="' + a + '" y="' + b + '" fill="' + (c || '#333') + '" font-size="' + (size || 11) + '">' + t + '</text>'; }
function poly(p, c, w) { s += '<polyline points="' + p + '" fill="none" stroke="' + c + '" stroke-width="' + (w || 1) + '" shape-rendering="auto"/>'; }
function candles(str) {
  var close = [];
  str.split(' ').forEach(function (t, i) {
    var m = t.match(/([rb])(\d+)-(\d+)(?:\^(\d+))?(?:_(\d+))?/);
    var c = m[1] === 'r' ? RED : BLUE, top = +m[2], h = +m[3], auto = h > 3 && h < 15 ? 2 : 0;
    var up = +(m[4] || auto), low = +(m[5] || auto), cx = Math.round(x(i));
    rect(cx - 1, top, 3, h < 2 ? 2 : h, c);
    rect(cx, top - up, 1, h + up + low, c);
    close.push(m[1] === 'r' ? top : top + h);
  });
  return close;
}
function average(a, n, seed) {
  return a.map(function (v, i) {
    var t = 0;
    for (var k = 0; k < n; k++) t += i - k < 0 ? seed : a[i - k];
    return x(i).toFixed(1) + ',' + (t / n).toFixed(1);
  }).join(' ');
}

// background, grid
rect(427, 94, 792, 390, '#fff');
rect(1219, 94, 56, 405, '#d6e1ee');
rect(427, 484, 792, 15, '#d6e1ee');
[105.5,125.5,145.5,164.5,184.5,204.5,223.5,243.5,263.5,282.5,302.5,321.5,341.5,381.5,415.5,448.5].forEach(function (y) { line(427, y, 1219, y, '#dcdcdc'); });
[[467,'10'],[546,'11'],[633,'12'],[720,'2021/01'],[802,'02'],[877,'03'],[968,'04'],[1059,'05'],[1137,'06']].forEach(function (m) {
  line(m[0] + .5, 95, m[0] + .5, 484, '#dcdcdc');
  line(m[0] + .5, 484, m[0] + .5, 499, '#888');
  text(m[0] + 2, 495, m[1], '#333', 10);
});
text(428, 495, '2020/09', '#333', 10);
text(1226, 495, '06/17', '#333', 10);

// volume bars, right edge lighter
var vol = [];
volume.split(' ').forEach(function (t, i) {
  var h = +t.slice(1), cx = Math.round(x(i)), red = t[0] === 'r';
  rect(cx - 1, 483 - h, 2, h, red ? RED : BLUE);
  rect(cx + 1, 483 - h, 1, h, red ? '#f28a8a' : '#7f9fd8');
  vol.push(483 - h);
});
poly(average(vol, 5, 452), '#c020a8');
poly(average(vol, 20, 449), '#e8a800');
poly('428,453 600,451 680,448 720,445 802,441 877,435 960,436 1020,436 1059,433 1110,440 1160,441 1189,438', '#0a8a35');
poly('428,453 560,453 660,452 740,449 820,446 900,442 1000,439 1080,438 1130,440 1189,438', '#777');

// prices
candles(stock);
poly('429,305 470,298 520,291 577,290 620,282 673,270 717,254 740,244 767,227 800,206 820,195 857,177 900,164 947,154 980,150 1020,148 1087,144 1113,142 1140,139 1189,131', '#0a8a35');
poly('429,337 470,327 550,313 620,298 653,293 703,282 740,270 773,257 820,242 857,231 880,225 947,207 993,195 1033,181 1053,173 1097,162 1137,153 1189,143', '#666');
var close = candles(kospi);
poly(average(close, 20, 289), '#eba500', 2);
poly(average(close, 10, 284), '#1c2f9c');
poly(average(close, 5, 280), '#b0209c');

// borders
line(427, 94.5, 1275, 94.5, '#777');
line(427, 354.5, 1275, 354.5, '#888');
line(427, 484.5, 1275, 484.5, '#888');
line(427, 498.5, 1275, 498.5, '#888');
line(1218.5, 94, 1218.5, 499, '#888');
line(427.5, 94, 427.5, 499, '#888');
line(1274.5, 94, 1274.5, 499, '#999');

// price scale
for (var p = 0; p < 11; p++) {
  var y = 145 + Math.round(p * 19.6);
  line(1219, y + .5, 1223, y + .5, '#666');
  line(1219, y + 10.5, 1221, y + 10.5, '#888');
  if (p !== 6) text(1225, y + 3, (p < 2 ? '3,' + (1 - p) : '2,' + (11 - p)) + '00.00', '#444', 10);
}
[[381,'3,000K'],[415,'2,000K'],[448,'1,000K']].forEach(function (v) { line(1219, v[0] + .5, 1224, v[0] + .5, '#666'); text(1225, v[0] + 4, v[1], '#444', 10); });
for (y = 361; y < 484; y += 7) line(1219, y + .5, 1221, y + .5, '#888');
text(1220, 105, 'LC:78.72', '#c8141e', 10);
text(1220, 115, 'HC:-44.76', '#1550b8', 10);
rect(1267, 107, 6, 9, '#1450c8');
text(1226, 126, '-0.42%', '#1550b8', 10);
rect(1223, 251, 50, 11, '#e81800');
text(1225, 260, '50,400', '#fff', 10);
text(1225, 270, '5.33%', '#c8141e', 10);
rect(1223, 416, 50, 11, '#1450c8');
text(1225, 425, '1,822K', '#fff', 10);
text(1225, 436, '77.67%', '#1550b8', 10);
rect(1266, 357, 7, 6, '#222');
s += '<path d="M1268 358.500l3 3M1271 358.500l-3 3" stroke="#fff"/>';

// legends
function box(a, b) { s += '<path d="M' + (a + .5) + ' ' + (b + .5) + 'h4v4h-4zM' + (a + 2) + ' ' + (b + 2.5) + 'h1" fill="none" stroke="#555"/>'; }
box(429, 99); box(504, 99); box(710, 99);
text(439, 105, '종합(KOSPI)');
text(514, 105, '종합(KOSPI) 종가 단순 5', '#b0109c');
text(639, 105, '10', '#1040b0', 10);
text(656, 105, '20', '#e0a000', 10);
text(673, 105, '60', '#0a8a35', 10);
text(691, 105, '120', '#555', 10);
rect(717, 96, 70, 11, '#efefef');
s += '<path d="M716.500 95.500h71v12h-71z" fill="none" stroke="#ccc"/>';
text(719, 105, 'JW중외제약우');
box(429, 359);
text(439, 366, '종합(KOSPI) 거래량', '#0a7878');
text(541, 366, '단순 5', '#b0109c');
text(577, 366, '20', '#e0a000', 10);
text(595, 366, '60', '#0a8a35', 10);
text(613, 366, '120', '#555', 10);
text(431, 377, '1,821,972주(77.67%)', '#333', 10);

// marks
text(456, 115, '최고 91,243 (09/21)', '#e00000', 10);
s += '<path d="M443 112.500l7-4v3h5v2h-5v3z" fill="#e00000"/>';
s += '<path d="M431.500 113.500h11v12h-11z" fill="#fff" stroke="#333"/><path d="M433.500 115.500h7v8h-7zM433 118.500h8M433 121.500h8M435.500 115v9M438.500 115v9" fill="none" stroke="#777"/>';
text(426, 309, '최저 2,266.93 (10/30)', '#0000d0', 10);
s += '<path d="M530 306h7v-4l7 4.500-7 4.500v-4h-7z" fill="#0000e0"/>';
text(1066, 115, '최고 3,281.96 (06/16)', '#e00000', 10);
s += '<path d="M1171 111h8v-4l7 4.500-7 4.500v-4h-8z" fill="#e00000"/>';
text(794, 339, '최저 28,200 (03/10)', '#0000d0', 10);
s += '<path d="M886 335h9v-4l7 4.500-7 4.500v-4h-9z" fill="#0000e0"/>';
text(676, 277, '배당락(-2.8%)', '#333');
text(733, 279, '무상증자(0.00%)', '#333');
s += '<path d="M713 281h1v10h4l-4.500 6-4.500-6h4zM771 283h1v11h4l-4.500 6-4.500-6h4z" fill="#e00000"/>';
document.getElementById('chart').innerHTML = s;
</script>
</body>
</html>
